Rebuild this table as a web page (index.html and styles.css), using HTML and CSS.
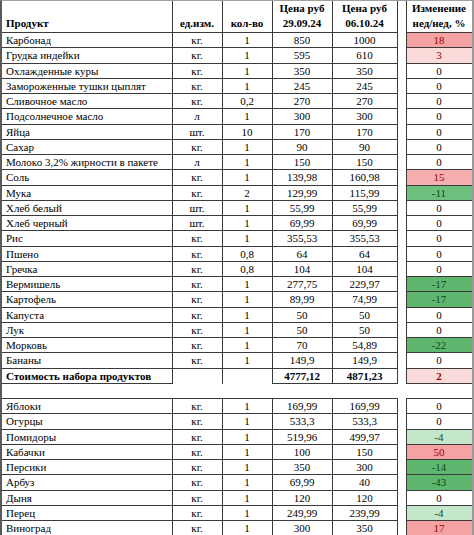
FILE: index.html
```html
<!DOCTYPE html>
<html lang="ru">
<head>
<meta charset="utf-8">
<title>Стоимость набора продуктов</title>
<link rel="stylesheet" href="styles.css">
</head>
<body>
<div class="sheet">
<table class="grid">
<colgroup><col class="c-name"><col class="c-unit"><col class="c-qty"><col class="c-p1"><col class="c-p2"><col class="c-gap"><col class="c-chg"></colgroup>
<thead>
<tr class="head"><th class="name">Продукт</th><th>ед.изм.</th><th>кол-во</th><th class="price">Цена руб<br>29.09.24</th><th class="price">Цена руб<br>06.10.24</th><td class="gap"></td><th class="chg">Изменение<br>нед/нед, %</th></tr>
</thead>
<tbody>
<tr><td class="name">Карбонад</td><td>кг.</td><td>1</td><td>850</td><td>1000</td><td class="gap"></td><td class="chg r3">18</td></tr>
<tr><td class="name">Грудка индейки</td><td>кг.</td><td>1</td><td>595</td><td>610</td><td class="gap"></td><td class="chg r1">3</td></tr>
<tr><td class="name">Охлажденные куры</td><td>кг.</td><td>1</td><td>350</td><td>350</td><td class="gap"></td><td class="chg">0</td></tr>
<tr><td class="name">Замороженные тушки цыплят</td><td>кг.</td><td>1</td><td>245</td><td>245</td><td class="gap"></td><td class="chg">0</td></tr>
<tr><td class="name">Сливочное масло</td><td>кг.</td><td>0,2</td><td>270</td><td>270</td><td class="gap"></td><td class="chg">0</td></tr>
<tr><td class="name">Подсолнечное масло</td><td>л</td><td>1</td><td>300</td><td>300</td><td class="gap"></td><td class="chg">0</td></tr>
<tr><td class="name">Яйца</td><td>шт.</td><td>10</td><td>170</td><td>170</td><td class="gap"></td><td class="chg">0</td></tr>
<tr><td class="name">Сахар</td><td>кг.</td><td>1</td><td>90</td><td>90</td><td class="gap"></td><td class="chg">0</td></tr>
<tr><td class="name">Молоко 3,2% жирности в пакете</td><td>л</td><td>1</td><td>150</td><td>150</td><td class="gap"></td><td class="chg">0</td></tr>
<tr><td class="name">Соль</td><td>кг.</td><td>1</td><td>139,98</td><td>160,98</td><td class="gap"></td><td class="chg r2">15</td></tr>
<tr><td class="name">Мука</td><td>кг.</td><td>2</td><td>129,99</td><td>115,99</td><td class="gap"></td><td class="chg g2">-11</td></tr>
<tr><td class="name">Хлеб белый</td><td>шт.</td><td>1</td><td>55,99</td><td>55,99</td><td class="gap"></td><td class="chg">0</td></tr>
<tr><td class="name">Хлеб черный</td><td>шт.</td><td>1</td><td>69,99</td><td>69,99</td><td class="gap"></td><td class="chg">0</td></tr>
<tr><td class="name">Рис</td><td>кг.</td><td>1</td><td>355,53</td><td>355,53</td><td class="gap"></td><td class="chg">0</td></tr>
<tr><td class="name">Пшено</td><td>кг.</td><td>0,8</td><td>64</td><td>64</td><td class="gap"></td><td class="chg">0</td></tr>
<tr><td class="name">Гречка</td><td>кг.</td><td>0,8</td><td>104</td><td>104</td><td class="gap"></td><td class="chg">0</td></tr>
<tr><td class="name">Вермишель</td><td>кг.</td><td>1</td><td>277,75</td><td>229,97</td><td class="gap"></td><td class="chg g3">-17</td></tr>
<tr><td class="name">Картофель</td><td>кг.</td><td>1</td><td>89,99</td><td>74,99</td><td class="gap"></td><td class="chg g3">-17</td></tr>
<tr><td class="name">Капуста</td><td>кг.</td><td>1</td><td>50</td><td>50</td><td class="gap"></td><td class="chg">0</td></tr>
<tr><td class="name">Лук</td><td>кг.</td><td>1</td><td>50</td><td>50</td><td class="gap"></td><td class="chg">0</td></tr>
<tr><td class="name">Морковь</td><td>кг.</td><td>1</td><td>70</td><td>54,89</td><td class="gap"></td><td class="chg g3">-22</td></tr>
<tr><td class="name">Бананы</td><td>кг.</td><td>1</td><td>149,9</td><td>149,9</td><td class="gap"></td><td class="chg">0</td></tr>
<tr class="total"><td class="name">Стоимость набора продуктов</td><td class="blank"></td><td class="blank"></td><td>4777,12</td><td>4871,23</td><td class="gap"></td><td class="chg r1">2</td></tr>
<tr class="spacer"><td colspan="7"></td></tr>
<tr><td class="name">Яблоки</td><td>кг.</td><td>1</td><td>169,99</td><td>169,99</td><td class="gap"></td><td class="chg">0</td></tr>
<tr><td class="name">Огурцы</td><td>кг.</td><td>1</td><td>533,3</td><td>533,3</td><td class="gap"></td><td class="chg">0</td></tr>
<tr><td class="name">Помидоры</td><td>кг.</td><td>1</td><td>519,96</td><td>499,97</td><td class="gap"></td><td class="chg g1">-4</td></tr>
<tr><td class="name">Кабачки</td><td>кг.</td><td>1</td><td>100</td><td>150</td><td class="gap"></td><td class="chg r3">50</td></tr>
<tr><td class="name">Персики</td><td>кг.</td><td>1</td><td>350</td><td>300</td><td class="gap"></td><td class="chg g3">-14</td></tr>
<tr><td class="name">Арбуз</td><td>кг.</td><td>1</td><td>69,99</td><td>40</td><td class="gap"></td><td class="chg g3">-43</td></tr>
<tr><td class="name">Дыня</td><td>кг.</td><td>1</td><td>120</td><td>120</td><td class="gap"></td><td class="chg">0</td></tr>
<tr><td class="name">Перец</td><td>кг.</td><td>1</td><td>249,99</td><td>239,99</td><td class="gap"></td><td class="chg g1">-4</td></tr>
<tr><td class="name">Виноград</td><td>кг.</td><td>1</td><td>300</td><td>350</td><td class="gap"></td><td class="chg r3">17</td></tr>
</tbody>
</table>
</div>
</body>
</html>
```
FILE: styles.css
```css
* { box-sizing: border-box; }
html, body { margin: 0; padding: 0; background: #fff; }
body {
  font-family: "Liberation Serif", "Times New Roman", serif;
  font-size: 11px;
  color: #000;
}
.sheet {
  width: 474px;
  height: 535px;
  overflow: hidden;
  border-left: 2px solid #5a5a5a;
  border-right: 2px solid #9a9a9a;
  border-top: 1px solid #a0a0a0;
}
.grid {
  border-collapse: collapse;
  table-layout: fixed;
  width: 470px;
}
.c-name { width: 170px; }
.c-unit { width: 50px; }
.c-qty { width: 50px; }
.c-p1 { width: 60px; }
.c-p2 { width: 65px; }
.c-gap { width: 9px; }
.c-chg { width: 66px; }

.grid td, .grid th {
  border: 1px solid #3a3a3a;
  padding: 0 2px;
  text-align: center;
  vertical-align: middle;
  line-height: 13px;
  white-space: nowrap;
  overflow: hidden;
}
.grid th { font-weight: bold; }
.grid .name { text-align: left; border-left: none; padding-left: 4px; }
.grid .gap { border: none; }
.grid .blank { border-bottom: none; }

.head { height: 30px; }
.head th, .head td { border-top: none; vertical-align: bottom; padding-bottom: 1px; line-height: 15px; }

tbody tr { height: 15px; }
tbody tr:nth-child(4n+2) { height: 16px; }
.total td { font-weight: bold; }
.spacer td { border: none; height: 15px; padding: 0; }

.r1 { background: #fbdada; color: #9c0006; }
.r2 { background: #f6afaf; color: #9c0006; }
.r3 { background: #f4a2a2; color: #9c0006; }
.g1 { background: #c4e6cb; color: #0c4a17; }
.g2 { background: #6cbf7c; color: #0c4a17; }
.g3 { background: #5fb76f; color: #0c4a17; }
```
